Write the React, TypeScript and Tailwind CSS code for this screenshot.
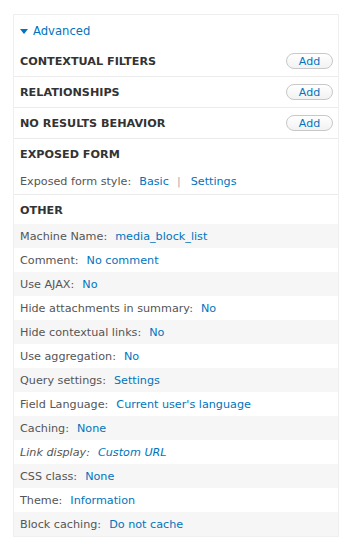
const rows: {label: string; value: string; italic?: boolean}[] = [
    {label: 'Machine Name:', value: 'media_block_list'},
    {label: 'Comment:', value: 'No comment'},
    {label: 'Use AJAX:', value: 'No'},
    {label: 'Hide attachments in summary:', value: 'No'},
    {label: 'Hide contextual links:', value: 'No'},
    {label: 'Use aggregation:', value: 'No'},
    {label: 'Query settings:', value: 'Settings'},
    {label: 'Field Language:', value: "Current user's language"},
    {label: 'Caching:', value: 'None'},
    {label: 'Link display:', value: 'Custom URL', italic: true},
    {label: 'CSS class:', value: 'None'},
    {label: 'Theme:', value: 'Information'},
    {label: 'Block caching:', value: 'Do not cache'},
];

function AddButton() {
    return (
        <button className="h-[16px] w-[47px] rounded-full border border-[#c8c8c8] bg-gradient-to-b from-white to-[#f2f2f2] text-[11px] leading-none text-[#0074bd]">
            Add
        </button>
    );
}

export default function App() {
    return (
        <div className="min-h-[551px] bg-white pt-[14px] pl-[13px] pr-[11px] font-['DejaVu_Sans',sans-serif] text-[11.2px]">
            <div className="border border-[#efefef] bg-white">
                {/* Cabeçalho Advanced */}
                <div className="flex h-[31px] items-center px-[6px] pt-[3px] text-[#0074bd] text-[11.6px]">
                    <svg width="8" height="6" viewBox="0 0 8 6" className="mr-[5px]">
                        <path d="M0 0 H8 L4 5 Z" fill="#0074bd"/>
                    </svg>
                    Advanced
                </div>

                {['CONTEXTUAL FILTERS', 'RELATIONSHIPS', 'NO RESULTS BEHAVIOR'].map(title => (
                    <div key={title} className="flex h-[31px] items-center justify-between border-b border-[#ebebeb] pl-[6px] pr-[5px]">
                        <span className="pt-[3px] font-bold text-[#333]">{title}</span>
                        <AddButton/>
                    </div>
                ))}

                <div className="flex h-[30px] items-center px-[6px] pt-[3px] font-bold text-[#333]">EXPOSED FORM</div>
                <div className="flex h-[26px] items-center border-b border-[#ebebeb] px-[6px] pt-[2px] text-[#555]">
                    <span>Exposed form style:</span>
                    <a className="ml-[8px] text-[#0074bd]">Basic</a>
                    <span className="ml-[8px] text-[#aaa]">|</span>
                    <a className="ml-[10px] text-[#0074bd]">Settings</a>
                </div>

                <div className="flex h-[29px] items-center px-[6px] pt-[3px] font-bold text-[#333]">OTHER</div>
                {rows.map((row, i) => (
                    <div
                        key={row.label}
                        className={`flex h-[24px] items-center px-[6px] pt-[3px] ${i % 2 === 0 ? 'bg-[#f6f6f6]' : 'bg-white'} ${row.italic ? 'italic' : ''}`}
                    >
                        <span className="text-[#555]">{row.label}</span>
                        <a className="ml-[8px] text-[#0074bd]">{row.value}</a>
                    </div>
                ))}
            </div>
        </div>
    );
}
